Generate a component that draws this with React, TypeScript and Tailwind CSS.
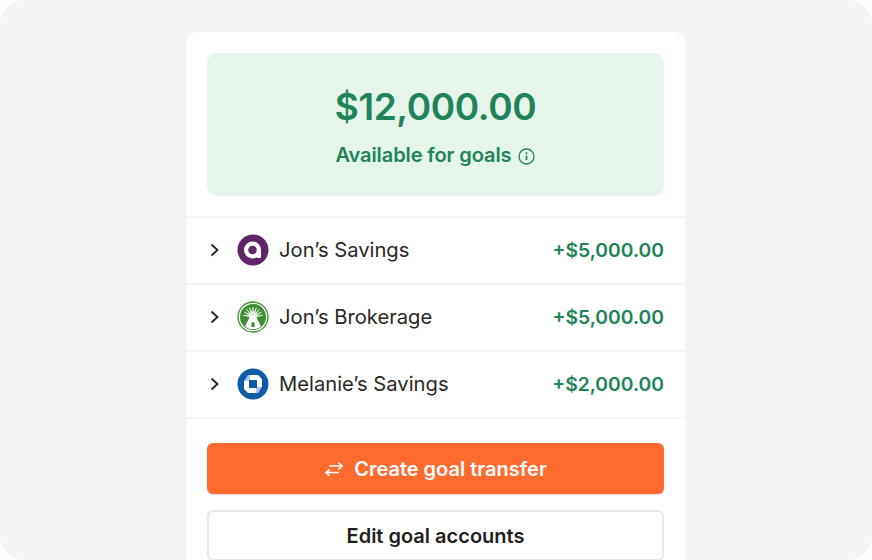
const font = "font-['Inter','Liberation_Sans',sans-serif]";

function AllyLogo() {
  return (
    <svg width="32" height="32" viewBox="0 0 32 32">
      <circle cx="16" cy="16" r="15.5" fill="#5f2568" />
      <circle cx="15.5" cy="16" r="6.4" fill="none" stroke="#fff" strokeWidth="4.2" />
      <path d="M19.8 16V24H24V16Z" fill="#fff" />
    </svg>
  );
}

function FidelityLogo() {
  const rays = [-80, -60, -40, -20, 0, 20, 40, 60, 80];
  return (
    <svg width="32" height="32" viewBox="0 0 32 32">
      <circle cx="16" cy="16" r="15.5" fill="#fff" />
      <circle cx="16" cy="16" r="15" fill="none" stroke="#3b8f2e" strokeWidth="1.3" />
      <circle cx="16" cy="16" r="13" fill="#3b8f2e" />
      {rays.map((angle) => (
        <path
          key={angle}
          d="M15.4 13L16 6L16.6 13Z"
          fill="#fff"
          stroke="#fff"
          strokeWidth="0.5"
          transform={`rotate(${angle} 16 16)`}
        />
      ))}
      <path d="M14 13.5H18L24 25.5A13 13 0 0 1 8 25.5Z" fill="#fff" />
      <path d="M14.4 26V22.5A1.6 1.6 0 0 1 17.6 22.5V26Z" fill="#3b8f2e" />
    </svg>
  );
}

function ChaseLogo() {
  return (
    <svg width="32" height="32" viewBox="0 0 32 32">
      <circle cx="16" cy="16" r="15.5" fill="#0f5ba7" />
      <path d="M13 7H21L25 11V19H20V12H13Z" fill="#fff" />
      <path d="M19 25H11L7 21V13H12V20H19Z" fill="#fff" />
      <rect x="12" y="12" width="8" height="8" fill="#0f5ba7" />
      <path d="M7 13L11 7H13V12H12V13Z" fill="#a9c8e4" />
      <path d="M25 19L21 25H19V20H20V19Z" fill="#a9c8e4" />
    </svg>
  );
}

const accounts = [
  { name: "Jon’s Savings", amount: "+$5,000.00", logo: <AllyLogo /> },
  { name: "Jon’s Brokerage", amount: "+$5,000.00", logo: <FidelityLogo /> },
  { name: "Melanie’s Savings", amount: "+$2,000.00", logo: <ChaseLogo /> },
];

export default function App() {
  return (
    <div className={`${font} h-[560px] w-[872px] overflow-hidden bg-white`}>
      <div className="h-full rounded-[24px] bg-[#f6f5f3] pt-8">
        <div className="ml-[186px] w-[499px] rounded-t-[10px] bg-white shadow-[0_0_2px_rgba(0,0,0,0.06)]">
          <div className="px-[21px] pt-[21px] pb-[20px]">
            <div className="flex h-[143px] flex-col items-center rounded-[10px] bg-[#e5f5ea] pt-[30px] text-[#20835a]">
              <div className="text-[37px] leading-[48px] font-semibold tracking-[-0.01em]">$12,000.00</div>
              <div className="mt-[11px] flex items-center gap-[7px] text-[20px] leading-[26px] font-semibold tracking-[-0.005em]">
                Available for goals
                <svg width="17" height="17" viewBox="0 0 17 17" fill="none" stroke="currentColor" className="mt-[2px]">
                  <circle cx="8.5" cy="8.5" r="7.5" strokeWidth="1.3" />
                  <path d="M8.5 7.5V12" strokeWidth="1.7" />
                  <circle cx="8.5" cy="5.2" r="1" fill="currentColor" stroke="none" />
                </svg>
              </div>
            </div>
          </div>
          {accounts.map((account) => (
            <div
              key={account.name}
              className="flex h-[67px] items-center border-t-2 border-[#f6f5f3] pr-[21px] pb-[1px] pl-[24px]"
            >
              <svg width="10" height="14" viewBox="0 0 10 14" fill="none" stroke="#23201e" strokeWidth="1.8">
                <path d="M1.5 1.5L7.5 7L1.5 12.5" />
              </svg>
              <div className="ml-[17px]">{account.logo}</div>
              <div className="ml-[10px] flex-1 text-[20.2px] text-[#2a2725]">{account.name}</div>
              <div className="mt-[1px] text-[19.3px] font-semibold text-[#20835a]">{account.amount}</div>
            </div>
          ))}
          <div className="flex flex-col gap-[16px] border-t-2 border-[#f6f5f3] px-[21px] pt-[24px] pb-4">
            <button
              type="button"
              className="flex h-[51px] items-center justify-center gap-[10px] rounded-[6px] bg-[#ff6a2e] text-[20px] font-semibold text-white shadow-[0_1px_2px_rgba(0,0,0,0.15)]"
            >
              <svg width="20" height="18" viewBox="0 0 20 18" fill="none" stroke="#fff" strokeWidth="1.7">
                <path d="M5 6H18M14.3 2.5L18 6L14.3 9.5" />
                <path d="M15 12.5H2M5.7 9.5L2 12.5L5.7 16" />
              </svg>
              Create goal transfer
            </button>
            <button
              type="button"
              className="flex h-[51px] items-center justify-center rounded-[6px] border-2 border-[#e9e8e6] bg-white text-[20px] font-semibold text-[#23201e]"
            >
              Edit goal accounts
            </button>
          </div>
        </div>
      </div>
    </div>
  );
}
